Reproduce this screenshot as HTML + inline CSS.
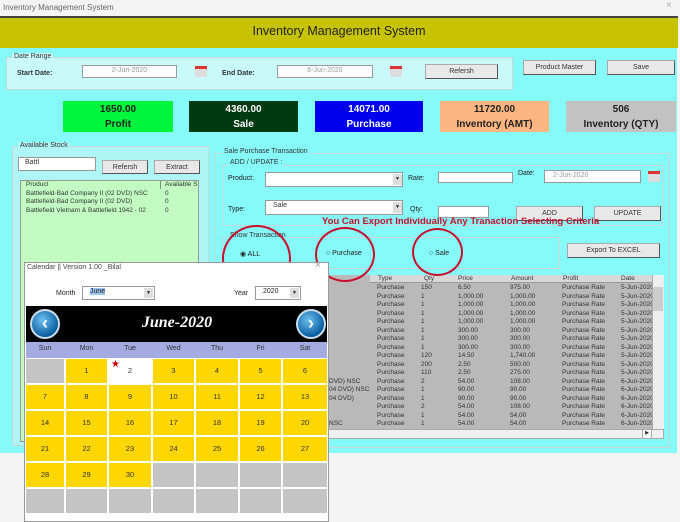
<!DOCTYPE html>
<html><head><style>
*{margin:0;padding:0;box-sizing:border-box;white-space:nowrap}
body{width:680px;height:513px;background:#f4f4f4;position:relative;overflow:hidden;font-family:"Liberation Sans",sans-serif;font-size:8px;color:#222}
.a{position:absolute}
.inp{position:absolute;background:#fff;border:1px solid #999;font-size:7px;color:#999;padding:1px 0 0 0;text-align:center}
.btn{position:absolute;background:#e8e8e8;border:1px solid #aaa;border-right-color:#555;border-bottom-color:#555;font-size:7px;text-align:center;line-height:13px;color:#333}
.fs{position:absolute;border:1px solid #c8d8d8}
.lg{position:absolute;font-size:7px;background:inherit;padding:0 2px;color:#333}
.tile{position:absolute;text-align:center;font-weight:bold;font-size:10px;line-height:15px;padding-top:1px}
.cal{position:absolute;width:12px;height:11px;background:linear-gradient(#d33 0 3px,#ddd 3px)}
.circ{position:absolute;border:2px solid #c8102e;border-radius:50%}
.cell{position:absolute;background:#ffd700;font-size:7.5px;text-align:center;color:#333}
.g{background:#c4c4c4}
#grid div{font-size:6.5px}
</style></head><body>
<div class="a" style="left:3px;top:3px;font-size:8px;color:#666">Inventory Management System</div>
<div class="a" style="left:666px;top:0px;font-size:10px;color:#aaa">×</div>
<div class="a" style="left:0;top:16px;width:678px;height:2px;background:#444"></div>
<div class="a" style="left:0;top:18px;width:678px;height:30px;background:#c7c300;text-align:center;font-size:12.5px;line-height:27px;color:#222">Inventory Management System</div>
<div class="a" style="left:0;top:48px;width:677px;height:405px;background:#86f9f9"></div>

<div class="fs" style="left:6px;top:57px;width:507px;height:33px;background:#c8fafa"></div>
<div class="lg" style="left:12px;top:53px;background:#c8fafa">Date Range</div>
<div class="a" style="left:17px;top:70px;font-size:7px;font-weight:bold;color:#333">Start Date:</div>
<div class="inp" style="left:82px;top:65px;width:95px;height:13px">2-Jun-2020</div>
<div class="cal" style="left:195px;top:66px"></div>
<div class="a" style="left:222px;top:70px;font-size:7px;font-weight:bold;color:#333">End Date:</div>
<div class="inp" style="left:277px;top:65px;width:96px;height:13px">6-Jun-2020</div>
<div class="cal" style="left:390px;top:66px"></div>
<div class="btn" style="left:425px;top:64px;width:73px;height:15px">Refersh</div>
<div class="btn" style="left:523px;top:60px;width:73px;height:15px">Product Master</div>
<div class="btn" style="left:607px;top:60px;width:68px;height:15px">Save</div>

<div class="tile" style="left:63px;top:101px;width:110px;height:31px;background:#00f53d;color:#222">1650.00<br>Profit</div>
<div class="tile" style="left:189px;top:101px;width:109px;height:31px;background:#003a10;color:#fff">4360.00<br>Sale</div>
<div class="tile" style="left:315px;top:101px;width:108px;height:31px;background:#0000ee;color:#fff">14071.00<br>Purchase</div>
<div class="tile" style="left:440px;top:101px;width:109px;height:31px;background:#fdb682;color:#222">11720.00<br>Inventory (AMT)</div>
<div class="tile" style="left:566px;top:101px;width:110px;height:31px;background:#c2c2c2;color:#222">506<br>Inventory (QTY)</div>

<div class="fs" style="left:12px;top:146px;width:197px;height:300px;background:#aef5f5"></div>
<div class="lg" style="left:18px;top:142px;background:#aef5f5">Available Stock</div>
<div class="inp" style="left:18px;top:157px;width:78px;height:14px;color:#333;text-align:left;padding-left:6px">Battl</div>
<div class="btn" style="left:102px;top:160px;width:46px;height:14px">Refersh</div>
<div class="btn" style="left:154px;top:160px;width:46px;height:14px">Extract</div>
<div class="a" style="left:20px;top:180px;width:179px;height:262px;background:#c2fcc2;border:1px solid #999"></div>
<div class="a" style="left:26px;top:181px;width:134px;overflow:hidden;font-size:6.5px;line-height:8.5px;color:#333">Product<br>Battlefield-Bad Company II (02 DVD) NSC<br>Battlefield-Bad Company II (02 DVD)<br>Battlefield Vietnam &amp; Battlefield 1942 - 02</div>
<div class="a" style="left:160px;top:180px;width:1px;height:9px;background:#888"></div>
<div class="a" style="left:165px;top:181px;width:34px;overflow:hidden;font-size:6.5px;line-height:8.5px;color:#333">Available S<br>0<br>0<br>0</div>

<div class="fs" style="left:215px;top:153px;width:455px;height:295px"></div>
<div class="lg" style="left:222px;top:148px;background:#86f9f9">Sale Purchase Transaction</div>
<div class="fs" style="left:222px;top:165px;width:442px;height:61px"></div>
<div class="lg" style="left:228px;top:159px;background:#86f9f9">ADD / UPDATE :</div>
<div class="a" style="left:228px;top:175px;font-size:7px">Product:</div>
<div class="inp" style="left:265px;top:172px;width:138px;height:15px"></div>
<div class="a" style="left:393px;top:174px;width:9px;height:11px;background:#ddd;font-size:5px;text-align:center;line-height:11px">▼</div>
<div class="a" style="left:408px;top:175px;font-size:7px">Rate:</div>
<div class="inp" style="left:438px;top:172px;width:75px;height:11px"></div>
<div class="a" style="left:518px;top:170px;font-size:7px">Date:</div>
<div class="inp" style="left:544px;top:170px;width:97px;height:13px;text-align:left;padding-left:8px">2-Jun-2020</div>
<div class="cal" style="left:648px;top:171px"></div>
<div class="a" style="left:228px;top:206px;font-size:7px">Type:</div>
<div class="inp" style="left:265px;top:200px;width:138px;height:15px;color:#333;text-align:left;padding-left:7px">Sale</div>
<div class="a" style="left:393px;top:202px;width:9px;height:11px;background:#ddd;font-size:5px;text-align:center;line-height:11px">▼</div>
<div class="a" style="left:410px;top:206px;font-size:7px">Qty:</div>
<div class="inp" style="left:438px;top:206px;width:51px;height:12px"></div>
<div class="btn" style="left:516px;top:206px;width:67px;height:15px">ADD</div>
<div class="btn" style="left:594px;top:206px;width:67px;height:15px">UPDATE</div>
<div class="a" style="left:322px;top:216px;font-size:9.5px;font-weight:bold;color:#c4102a">You Can Export Individually Any Tranaction Selecting Criteria</div>

<div class="fs" style="left:222px;top:237px;width:338px;height:32px"></div>
<div class="lg" style="left:228px;top:232px;background:#86f9f9">Show Transaction</div>
<div class="a" style="left:240px;top:250px;font-size:7px">◉ ALL</div>
<div class="a" style="left:326px;top:250px;font-size:7px">○ Purchase</div>
<div class="a" style="left:429px;top:250px;font-size:7px">○ Sale</div>
<div class="btn" style="left:567px;top:243px;width:93px;height:15px">Export To EXCEL</div>

<div class="a" style="left:222px;top:275px;width:442px;height:154px;background:#b9b9b9"></div>
<div class="a" style="left:370px;top:275px;width:282px;height:8px;background:#d8d8d8;border-bottom:1px solid #999"></div>
<div class="a" style="left:652px;top:275px;width:12px;height:154px;background:#eee;border-left:1px solid #aaa"></div>
<div class="a" style="left:653px;top:287px;width:10px;height:24px;background:#ccc"></div>
<div class="a" style="left:222px;top:429px;width:442px;height:10px;background:#f0f0f0;border:1px solid #aaa"></div>
<div class="a" style="left:642px;top:429px;width:10px;height:10px;background:#fff;border:1px solid #aaa;font-size:5px;text-align:center">▶</div>
<div class="a" id="grid" style="left:0;top:0;font-size:6.5px;line-height:8.5px;color:#333"></div>

<div class="circ" style="left:222px;top:225px;width:69px;height:67px"></div>
<div class="circ" style="left:315px;top:227px;width:60px;height:55px"></div>
<div class="circ" style="left:412px;top:228px;width:51px;height:48px"></div>

<div class="a" style="left:24px;top:262px;width:305px;height:260px;background:#fff;border:1px solid #999"></div>
<div class="a" style="left:27px;top:264px;font-size:7px;color:#444">Calendar || Version 1.00 _Bilal</div>
<div class="a" style="left:315px;top:260px;font-size:10px;color:#999">×</div>
<div class="a" style="left:56px;top:290px;font-size:7px">Month</div>
<div class="inp" style="left:82px;top:286px;width:73px;height:14px;text-align:left;padding-left:7px;color:#222"><span style="background:#9cc4f0">June</span></div>
<div class="a" style="left:144px;top:288px;width:9px;height:10px;background:#ddd;font-size:5px;text-align:center;line-height:10px">▼</div>
<div class="a" style="left:234px;top:290px;font-size:7px">Year</div>
<div class="inp" style="left:255px;top:286px;width:46px;height:14px;color:#222;text-align:left;padding-left:7px">2020</div>
<div class="a" style="left:290px;top:288px;width:9px;height:10px;background:#ddd;font-size:5px;text-align:center;line-height:10px">▼</div>
<div class="a" style="left:26px;top:306px;width:301px;height:36px;background:#000"></div>
<div class="a" style="left:30px;top:309px;width:30px;height:30px;border-radius:50%;background:radial-gradient(circle at 40% 35%,#6ec0f0,#0a5fa0 70%);border:2px solid #cde;color:#fff;font-size:18px;font-weight:bold;text-align:center;line-height:25px">‹</div>
<div class="a" style="left:296px;top:309px;width:30px;height:30px;border-radius:50%;background:radial-gradient(circle at 40% 35%,#6ec0f0,#0a5fa0 70%);border:2px solid #cde;color:#fff;font-size:18px;font-weight:bold;text-align:center;line-height:25px">›</div>
<div class="a" style="left:100px;top:314px;width:154px;text-align:center;color:#fff;font-family:'Liberation Serif',serif;font-style:italic;font-weight:bold;font-size:16px">June-2020</div>
<div class="a" style="left:26px;top:342px;width:301px;height:16px;background:#a3abe0"></div>
<div id="cal"></div>
<script>
var cols=[26,66,109,153,196,240,283],w=[38,41,42,41,42,41,44];
var names=["Sun","Mon","Tue","Wed","Thu","Fri","Sat"],h='';
for(var i=0;i<7;i++)h+='<div class="a" style="left:'+cols[i]+'px;top:345px;width:'+w[i]+'px;text-align:center;font-size:7px;color:#333">'+names[i]+'</div>';
for(var r=0;r<6;r++)for(var c=0;c<7;c++){var d=r*7+c;var y=359+r*26;var cls='cell',t='';
if(d>=1&&d<=30){t=d}else cls+=' g';
var st='';if(d==2)st='background:#fff;';
h+='<div class="'+cls+'" style="'+st+'left:'+cols[c]+'px;top:'+y+'px;width:'+w[c]+'px;height:24px;line-height:24px">'+t+(d==2?'<span style="position:absolute;left:2px;top:-6px;color:#c00;font-size:10px">★</span>':'')+'</div>';}
document.getElementById('cal').innerHTML=h;
var rows=[["Purchase","150","6.50","975.00","5"],["Purchase","1","1,000.00","1,000.00","5"],["Purchase","1","1,000.00","1,000.00","5"],["Purchase","1","1,000.00","1,000.00","5"],["Purchase","1","1,000.00","1,000.00","5"],["Purchase","1","300.00","300.00","5"],["Purchase","1","300.00","300.00","5"],["Purchase","1","300.00","300.00","5"],["Purchase","120","14.50","1,740.00","5"],["Purchase","200","2.50","500.00","5"],["Purchase","110","2.50","275.00","5"],["Purchase","2","54.00","108.00","6"],["Purchase","1","90.00","90.00","6"],["Purchase","1","90.00","90.00","6"],["Purchase","2","54.00","108.00","6"],["Purchase","1","54.00","54.00","6"],["Purchase","1","54.00","54.00","6"]];
var pre={11:"DVD) NSC",12:"04 DVD) NSC",13:"04 DVD)",16:"NSC"};
var g='<div class="a" style="left:378px;top:275px">Type</div><div class="a" style="left:424px;top:275px">Qty</div><div class="a" style="left:458px;top:275px">Price</div><div class="a" style="left:511px;top:275px">Amount</div><div class="a" style="left:563px;top:275px">Profit</div><div class="a" style="left:621px;top:275px">Date</div>';
for(var k=0;k<rows.length;k++){var y=284+k*8.5,R=rows[k];
if(pre[k])g+='<div class="a" style="left:329px;top:'+y+'px;width:44px;overflow:hidden">'+pre[k]+'</div>';
g+='<div class="a" style="left:377px;top:'+y+'px">'+R[0]+'</div><div class="a" style="left:421px;top:'+y+'px">'+R[1]+'</div><div class="a" style="left:458px;top:'+y+'px">'+R[2]+'</div><div class="a" style="left:510px;top:'+y+'px">'+R[3]+'</div><div class="a" style="left:562px;top:'+y+'px">Purchase Rate</div><div class="a" style="left:621px;top:'+y+'px;width:31px;overflow:hidden">'+R[4]+'-Jun-2020</div>';}
document.getElementById('grid').innerHTML=g;
</script>
</body></html>
